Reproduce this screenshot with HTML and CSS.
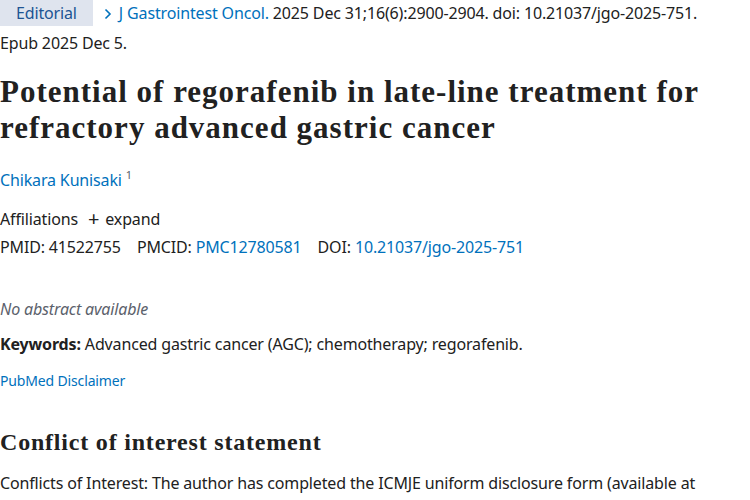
FILE: index.html
```html
<!DOCTYPE html>
<html>
<head>
<meta charset="utf-8">
<link rel="stylesheet" href="styles.css">
</head>
<body>
<main class="article">
  <div class="cit">
    <span class="ptype">Editorial</span>
    <span class="journal"><svg class="chev" width="10" height="12" viewBox="0 0 10 12"><path d="M2.5 1.5 L7 6 L2.5 10.5" fill="none" stroke="#0071bc" stroke-width="1.6"/></svg>J Gastrointest Oncol.</span> 2025 Dec 31;16(6):2900-2904. doi: 10.21037/jgo-2025-751. Epub 2025 Dec 5.
  </div>
  <h1 class="title">Potential of regorafenib in late-line treatment for refractory advanced gastric cancer</h1>
  <div class="authors"><a class="link">Chikara Kunisaki</a> <sup class="sup">1</sup></div>
  <div class="affil">Affiliations <span class="plus">+</span> expand</div>
  <div class="ids">
    <span class="id">PMID: 41522755</span>
    <span class="id">PMCID: <a class="link">PMC12780581</a></span>
    <span class="id">DOI: <a class="link">10.21037/jgo-2025-751</a></span>
  </div>
  <p class="noabs">No abstract available</p>
  <p class="kw"><strong>Keywords:</strong> Advanced gastric cancer (AGC); chemotherapy; regorafenib.</p>
  <p class="disc"><a class="link">PubMed Disclaimer</a></p>
  <h2 class="h2">Conflict of interest statement</h2>
  <p class="coi">Conflicts of Interest: The author has completed the ICMJE uniform disclosure form (available at https://jgo.amegroups.com/article/view/10.21037/jgo-2025-751/coif). The author has no conflicts of interest to declare.</p>
</main>
</body>
</html>
```
FILE: styles.css
```css
html, body { margin: 0; padding: 0; background: #fff; }
body {
  font-family: "Noto Sans", "Open Sans", sans-serif;
  font-size: 16px;
  letter-spacing: -0.15px;
  color: #212121;
}
.article { width: 750px; }
.cit { line-height: 30px; margin-top: -2px; max-width: 720px; }
.ptype {
  display: inline-block;
  background: #dfe4ee;
  color: #205493;
  padding: 0 16px;
  line-height: 26px;
  margin-right: 6px;
}
.journal { color: #0071bc; }
.chev { margin-right: 6px; vertical-align: -1px; }
.title {
  font-family: "Liberation Serif", serif;
  font-weight: bold;
  font-size: 31px;
  letter-spacing: 1px;
  line-height: 36px;
  margin: 16px 0 0;
  color: #212121;
}
.link { color: #0071bc; text-decoration: none; }
.authors { margin-top: 23px; line-height: 22px; }
.sup { font-size: 11px; color: #5b616b; vertical-align: 7px; line-height: 0; }
.affil { margin-top: 17px; line-height: 22px; }
.plus { font-size: 20px; margin: 0 2px 0 6px; vertical-align: -1px; }
.ids { display: flex; gap: 16px; line-height: 22px; margin-top: 6px; }
.noabs { font-style: italic; color: #5b616b; margin: 40px 0 0; line-height: 22px; }
.kw { margin: 13px 0 0; line-height: 22px; }
.disc { margin: 15px 0 0; font-size: 14px; line-height: 22px; }
.h2 {
  font-family: "Liberation Serif", serif;
  font-weight: bold;
  font-size: 24px;
  letter-spacing: 0.8px;
  line-height: 30px;
  margin: 35px 0 0;
}
.coi { margin: 13px 0 0; line-height: 26px; }
```
